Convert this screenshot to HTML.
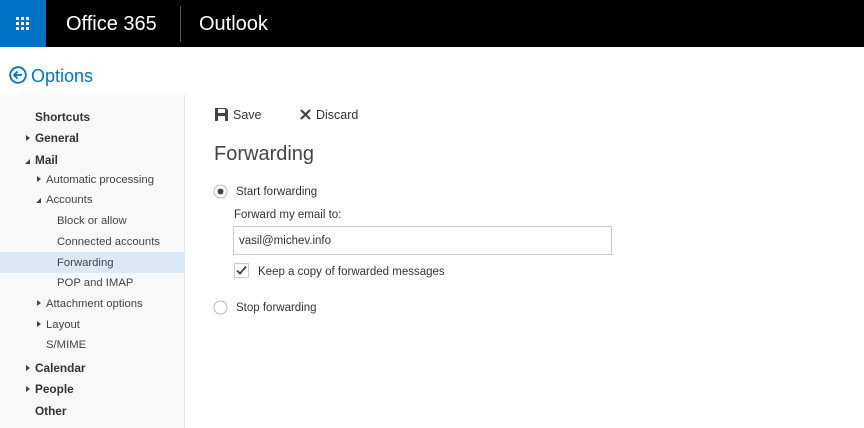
<!DOCTYPE html>
<html><head><meta charset="utf-8"><style>
*{margin:0;padding:0;box-sizing:border-box}
body{width:864px;height:428px;overflow:hidden;background:#fff;font-family:"Liberation Sans",sans-serif;color:#333;position:relative}
.top{position:absolute;left:0;top:0;width:864px;height:47px;background:#000}
.waffle{position:absolute;left:0;top:0;width:46px;height:47px;background:#0072c6}
.t{position:absolute;color:#fff;font-size:20px;top:13px}
.sep{position:absolute;left:180px;top:6px;width:1px;height:36px;background:#555}
.opt{position:absolute;left:9px;top:66px;color:#0072c6;font-size:18px}
.side{position:absolute;left:0;top:95px;width:185px;height:333px;background:#f8f8f8;border-right:1px solid #e6e6e6}
.i{position:absolute;font-size:11.3px;color:#444;white-space:nowrap;margin-top:1px}
.b{font-weight:bold;color:#333;font-size:11.8px}
.hl{position:absolute;left:0;top:252px;width:185px;height:21px;background:#dae9f5}
.tri{display:inline-block;width:0;height:0;border-top:3.5px solid transparent;border-bottom:3.5px solid transparent;border-left:4px solid #444;margin-right:5px;vertical-align:1px}
.dn{display:inline-block;width:0;height:0;border-left:5px solid transparent;border-bottom:5px solid #444;margin-right:5px}
.c{position:absolute;font-size:11.5px;color:#333;white-space:nowrap;margin-top:1px}
</style></head><body>
<div class="top"></div>
<div class="waffle"><svg width="46" height="47"><g fill="#fff">
<rect x="16" y="17" width="3" height="3"/><rect x="21" y="17" width="3" height="3"/><rect x="26" y="17" width="3" height="3"/>
<rect x="16" y="22" width="3" height="3"/><rect x="21" y="22" width="3" height="3"/><rect x="26" y="22" width="3" height="3"/>
<rect x="16" y="27" width="3" height="3"/><rect x="21" y="27" width="3" height="3"/><rect x="26" y="27" width="3" height="3"/></g></svg></div>
<div class="t" style="left:66px">Office 365</div>
<div class="sep"></div>
<div class="t" style="left:199px">Outlook</div>
<div class="opt"><svg width="18" height="18" style="vertical-align:-2px;margin-right:4px"><circle cx="9" cy="9" r="7.8" fill="none" stroke="#0072c6" stroke-width="1.8"/><path d="M13 9H5.5M8.5 5.5L5 9l3.5 3.5" fill="none" stroke="#0072c6" stroke-width="1.8"/></svg>Options</div>
<div class="side"></div>
<div class="hl"></div>
<div class="i b" style="left:35px;top:109px">Shortcuts</div>
<div class="i b" style="left:26px;top:130px"><span class="tri"></span>General</div>
<div class="i b" style="left:25px;top:152px"><span class="dn"></span>Mail</div>
<div class="i" style="left:37px;top:173px"><span class="tri"></span>Automatic processing</div>
<div class="i" style="left:36px;top:193px"><span class="dn"></span>Accounts</div>
<div class="i" style="left:57px;top:214px">Block or allow</div>
<div class="i" style="left:57px;top:235px">Connected accounts</div>
<div class="i" style="left:57px;top:256px">Forwarding</div>
<div class="i" style="left:57px;top:276px">POP and IMAP</div>
<div class="i" style="left:37px;top:297px"><span class="tri"></span>Attachment options</div>
<div class="i" style="left:37px;top:318px"><span class="tri"></span>Layout</div>
<div class="i" style="left:46px;top:338px">S/MIME</div>
<div class="i b" style="left:26px;top:360px"><span class="tri"></span>Calendar</div>
<div class="i b" style="left:26px;top:381px"><span class="tri"></span>People</div>
<div class="i b" style="left:35px;top:403px">Other</div>

<div class="c" style="left:215px;top:107px;font-size:12.5px"><svg width="13" height="13" style="vertical-align:-2px;margin-right:5px"><path d="M0 0h11l2 2v11H0z" fill="#444"/><rect x="3" y="1" width="7" height="4" fill="#fff"/><rect x="3" y="8" width="7" height="5" fill="#fff"/></svg>Save</div>
<div class="c" style="left:300px;top:107px;font-size:12.5px"><svg width="11" height="11" style="vertical-align:-1px;margin-right:5px"><path d="M1 1l9 9M10 1l-9 9" stroke="#444" stroke-width="2.2"/></svg>Discard</div>
<div class="c" style="left:214px;top:142px;font-size:20px;color:#444">Forwarding</div>
<svg style="position:absolute;left:213px;top:184px" width="15" height="15"><circle cx="7.5" cy="7.5" r="6.5" fill="#fff" stroke="#bbb"/><circle cx="7.5" cy="7.5" r="3" fill="#444"/></svg>
<div class="c" style="left:236px;top:185px">Start forwarding</div>
<div class="c" style="left:234px;top:208px">Forward my email to:</div>
<div style="position:absolute;left:233px;top:226px;width:379px;height:29px;border:1px solid #c8c8c8"></div>
<div class="c" style="left:239px;top:234px">vasil@michev.info</div>
<svg style="position:absolute;left:234px;top:263px" width="15" height="15"><rect x=".5" y=".5" width="14" height="14" fill="#fff" stroke="#ccc"/><path d="M3 7.5l3 3 6-7" fill="none" stroke="#444" stroke-width="1.8"/></svg>
<div class="c" style="left:258px;top:265px">Keep a copy of forwarded messages</div>
<svg style="position:absolute;left:213px;top:300px" width="15" height="15"><circle cx="7.5" cy="7.5" r="6.5" fill="#fff" stroke="#bbb"/></svg>
<div class="c" style="left:236px;top:301px">Stop forwarding</div>
</body></html>
